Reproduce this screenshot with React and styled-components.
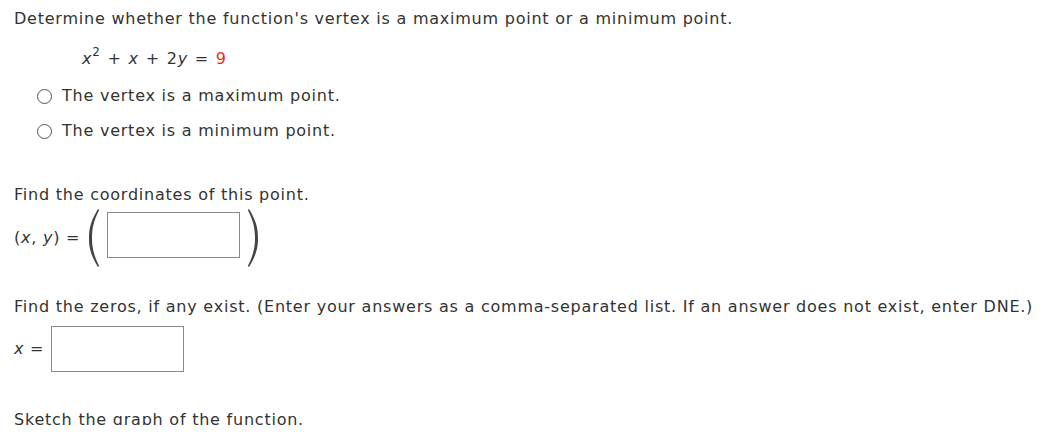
import React from "react";
import styled, { createGlobalStyle } from "styled-components";

const Global = createGlobalStyle`
  body {
    margin: 0;
    background: #fff;
    font-family: "DejaVu Sans", Verdana, sans-serif;
    color: #333;
  }
`;

const Page = styled.div`
  height: 425px;
  overflow: hidden;
  padding: 9px 0 0 14px;
  box-sizing: border-box;
  font-size: 16px;
  letter-spacing: 0.77px;
`;

const Prompt = styled.p`
  margin: 0;
  line-height: 20px;
  white-space: nowrap;
`;

const Equation = styled.div`
  margin: 20px 0 0 68px;
  line-height: 20px;
  word-spacing: 1px;
  i { font-style: italic; }
  sup { font-size: 12px; vertical-align: 8px; line-height: 0; }
`;

const Red = styled.span`
  color: #e8291c;
`;

const Options = styled.div`
  display: flex;
  flex-direction: column;
  gap: 15px;
  margin: 17px 0 0 23px;
`;

const Option = styled.label`
  display: flex;
  align-items: center;
  gap: 10px;
  line-height: 20px;
`;

const Radio = styled.span`
  width: 13px;
  height: 13px;
  border: 1.3px solid #555;
  border-radius: 50%;
  flex: none;
`;

const Section = styled.section`
  margin-top: ${p => p.$top}px;
`;

const AnswerRow = styled.div`
  display: flex;
  align-items: center;
  margin-top: ${p => p.$top}px;
`;

const Lhs = styled.span`
  line-height: 20px;
  width: ${p => p.$w}px;
  flex: none;
  white-space: nowrap;
`;

const Box = styled.div`
  width: ${p => p.$w}px;
  height: ${p => p.$h}px;
  border: 1px solid #8a8a8a;
  box-sizing: border-box;
  background: #fff;
  margin: 0 ${p => p.$mx || 0}px ${p => p.$mb || 0}px;
`;

const ParenSvg = styled.svg`
  flex: none;
  transform: ${p => (p.$flip ? "scaleX(-1)" : "none")};
`;

const Paren = ({ flip }) => (
  <ParenSvg $flip={flip} width="14" height="60" viewBox="0 0 14 60">
    <path d="M11 1 C3 14 2 22 2 30 C2 38 3 46 11 59 L12.2 58 C6 46 5 38 5 30 C5 22 6 14 12.2 2 Z" fill="#444" />
  </ParenSvg>
);

export default function App() {
  return (
    <>
      <Global />
      <Page>
        <Prompt>Determine whether the function's vertex is a maximum point or a minimum point.</Prompt>
        <Equation>
          <i>x</i><sup>2</sup> + <i>x</i> + 2<i>y</i> = <Red>9</Red>
        </Equation>
        <Options>
          <Option><Radio />The vertex is a maximum point.</Option>
          <Option><Radio />The vertex is a minimum point.</Option>
        </Options>

        <Section $top={44}>
          <Prompt>Find the coordinates of this point.</Prompt>
          <AnswerRow $top={3}>
            <Lhs $w={73}>(<i>x</i>, <i>y</i>) =</Lhs>
            <Paren />
            <Box $w={133} $h={46} $mx={6} $mb={7} />
            <Paren flip />
          </AnswerRow>
        </Section>

        <Section $top={29}>
          <Prompt>Find the zeros, if any exist. (Enter your answers as a comma-separated list. If an answer does not exist, enter DNE.)</Prompt>
          <AnswerRow $top={9}>
            <Lhs $w={37}><i>x</i> =</Lhs>
            <Box $w={133} $h={46} />
          </AnswerRow>
        </Section>

        <Section $top={38}>
          <Prompt>Sketch the graph of the function.</Prompt>
        </Section>
      </Page>
    </>
  );
}
